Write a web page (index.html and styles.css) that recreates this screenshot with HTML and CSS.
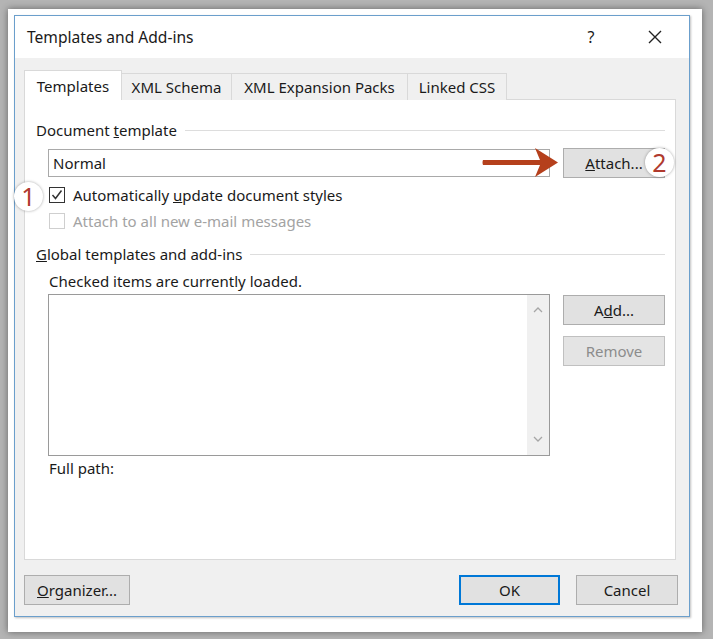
FILE: index.html
```html
<!DOCTYPE html>
<html lang="en">

<head>
    <meta charset="UTF-8">
    <title>Templates and Add-ins</title>
    <link rel="stylesheet" href="styles.css">
</head>

<body>
    <div class="frame">
        <div class="dialog">
            <div class="titlebar">
                <span class="title">Templates and Add-ins</span>
                <span class="help">?</span>
                <span class="close">
                    <svg width="16" height="16" viewBox="0 0 16 16">
                        <path d="M2 2 L14 14 M14 2 L2 14" stroke="#222" stroke-width="1.4" fill="none" />
                    </svg>
                </span>
            </div>

            <div class="content">
                <div class="tabs">
                    <div class="tab active tab-templates">Templates</div>
                    <div class="tab tab-schema">XML Schema</div>
                    <div class="tab tab-packs">XML Expansion Packs</div>
                    <div class="tab tab-css">Linked CSS</div>
                </div>

                <div class="panel">
                    <div class="group-title"><span>Document <u>t</u>emplate</span></div>

                    <div class="template-row">
                        <div class="textbox">Normal</div>
                        <button class="btn" type="button"><u>A</u>ttach...</button>
                    </div>

                    <div class="check-row first">
                        <span class="checkbox checked">
                            <svg width="14" height="14" viewBox="0 0 14 14">
                                <path d="M2.5 7 L5.5 10.5 L11.5 2.5" stroke="#333" stroke-width="1.5" fill="none" />
                            </svg>
                        </span>
                        <span>Automatically <u>u</u>pdate document styles</span>
                    </div>
                    <div class="check-row disabled">
                        <span class="checkbox"></span>
                        <span>Attach to all new e-mail messages</span>
                    </div>

                    <div class="group-title global"><span><u>G</u>lobal templates and add-ins</span></div>
                    <p class="hint">Checked items are currently loaded.</p>

                    <div class="list-row">
                        <div class="listbox">
                            <div class="scrollbar">
                                <svg width="12" height="8" viewBox="0 0 12 8">
                                    <path d="M2 6 L6 2 L10 6" stroke="#a6a6a6" stroke-width="1.3" fill="none" />
                                </svg>
                                <svg width="12" height="8" viewBox="0 0 12 8">
                                    <path d="M2 2 L6 6 L10 2" stroke="#a6a6a6" stroke-width="1.3" fill="none" />
                                </svg>
                            </div>
                        </div>
                        <div class="side-buttons">
                            <button class="btn" type="button">A<u>d</u>d...</button>
                            <button class="btn" type="button" disabled>Remove</button>
                        </div>
                    </div>

                    <p class="hint path">Full path:</p>
                </div>

                <div class="footer">
                    <button class="btn organizer" type="button"><u>O</u>rganizer...</button>
                    <div class="spacer"></div>
                    <button class="btn ok" type="button">OK</button>
                    <button class="btn" type="button">Cancel</button>
                </div>
            </div>
        </div>

        <!-- callouts drawn over the screenshot -->
        <div class="callout callout-one">1</div>
        <div class="callout callout-two">2</div>
        <svg class="arrow" width="76" height="30" viewBox="0 0 76 30">
            <path d="M1 12 Q0 14.5 1 17 L58 17 L53 29 L76 14.5 L53 0 L58 12 Z" fill="#b5401c" />
        </svg>
    </div>
</body>

</html>
```

FILE: styles.css
```css
body {
    margin: 0;
    background-color: #b4b4b4;
    font-family: "Noto Sans", "Open Sans", sans-serif;
    font-size: 15px;
    color: #1a1a1a;
}

.frame {
    position: relative;
    height: 623px;
    margin: 9px 11px 7px 8px;
    padding: 6px 12px 15px 6px;
    box-sizing: border-box;
    background-color: #fff;
    box-shadow: 0 0 7px rgba(0, 0, 0, 0.45);
}

.dialog {
    height: 100%;
    box-sizing: border-box;
    border: 1px solid #6b9fcc;
    box-shadow: 1px 1px 2px rgba(0, 0, 0, 0.25);
    display: flex;
    flex-direction: column;
    background-color: #f0f0f0;
}

.titlebar {
    height: 42px;
    flex: none;
    display: flex;
    align-items: center;
    padding-left: 12px;
    background-color: #fff;
}

.title {
    font-size: 15.6px;
    flex: 1;
}

.help {
    width: 20px;
    text-align: center;
    font-size: 16px;
    margin-right: 46px;
}

.close {
    width: 16px;
    height: 16px;
    margin-right: 26px;
}

.content {
    flex: 1;
    display: flex;
    flex-direction: column;
    padding: 12px 11px 11px 9px;
}

/* tabs */
.tabs {
    display: flex;
    align-items: flex-end;
    height: 30px;
    margin-bottom: -1px;
    position: relative;
    z-index: 1;
}

.tab {
    height: 27px;
    box-sizing: border-box;
    border: 1px solid #d9d9d9;
    border-bottom: none;
    margin-left: -1px;
    display: flex;
    align-items: center;
    justify-content: center;
    background-color: #f0f0f0;
}

.tab.active {
    height: 30px;
    background-color: #fff;
    margin-left: 0;
}

.tab-templates {
    width: 98px;
}

.tab-schema {
    width: 111px;
}

.tab-packs {
    width: 177px;
}

.tab-css {
    width: 100px;
}

.panel {
    flex: 1;
    margin-right: 2px;
    background-color: #fff;
    border: 1px solid #d9d9d9;
    padding: 0 10px 0 11px;
}

.group-title {
    display: flex;
    align-items: center;
    height: 20px;
    margin-top: 20px;
}

.group-title::after {
    content: "";
    flex: 1;
    border-top: 1px solid #dddddd;
    margin-left: 8px;
}

.group-title.global {
    margin-top: 13px;
}

.template-row {
    display: flex;
    align-items: center;
    margin: 8px 0 0 12px;
    height: 30px;
}

.textbox {
    width: 502px;
    height: 28px;
    box-sizing: border-box;
    border: 1px solid #a9a9a9;
    padding-left: 4px;
    line-height: 26px;
    margin-right: 13px;
}

.btn {
    font-family: inherit;
    font-size: 15px;
    color: #1a1a1a;
    width: 102px;
    height: 30px;
    padding: 0;
    background-color: #e1e1e1;
    border: 1px solid #adadad;
}

.btn:disabled {
    color: #8c8c8c;
    background-color: #e4e4e4;
    border-color: #c0c0c0;
}

.check-row {
    display: flex;
    align-items: center;
    height: 20px;
    margin: 6px 0 0 13px;
}

.check-row.first {
    margin-top: 7px;
}

.checkbox {
    width: 16px;
    height: 16px;
    box-sizing: border-box;
    border: 1px solid #333;
    margin-right: 8px;
    display: flex;
    align-items: center;
    justify-content: center;
}

.check-row.disabled {
    color: #a3a3a3;
}

.check-row.disabled .checkbox {
    border-color: #cfcfcf;
}

.hint {
    margin: 7px 0 0 13px;
    height: 20px;
    line-height: 20px;
}

.hint.path {
    margin-top: 2px;
}

.list-row {
    display: flex;
    align-items: flex-start;
    margin: 3px 0 0 12px;
}

.listbox {
    width: 502px;
    height: 162px;
    box-sizing: border-box;
    border: 1px solid #9a9a9a;
    margin-right: 13px;
    display: flex;
    justify-content: flex-end;
}

.scrollbar {
    width: 22px;
    background-color: #f0f0f0;
    display: flex;
    flex-direction: column;
    align-items: center;
    justify-content: space-between;
    padding: 11px 0 12px;
}

.side-buttons {
    display: flex;
    flex-direction: column;
    gap: 11px;
    margin-top: 1px;
}

.footer {
    display: flex;
    margin-top: 15px;
}

.organizer {
    width: 106px;
}

.spacer {
    flex: 1;
}

.ok {
    width: 101px;
    margin-right: 16px;
    border-color: #0078d7;
    box-shadow: inset 0 0 0 1px #0078d7;
}

/* annotations */
.callout {
    position: absolute;
    width: 29px;
    height: 29px;
    border-radius: 50%;
    background-color: #fff;
    box-shadow: 0 0 3px rgba(0, 0, 0, 0.35);
    color: #b03a2e;
    font-size: 25px;
    line-height: 29px;
    text-align: center;
}

.callout-one {
    left: 6px;
    top: 173px;
}

.callout-two {
    left: 637px;
    top: 139px;
}

.arrow {
    position: absolute;
    left: 474px;
    top: 139px;
}
```
